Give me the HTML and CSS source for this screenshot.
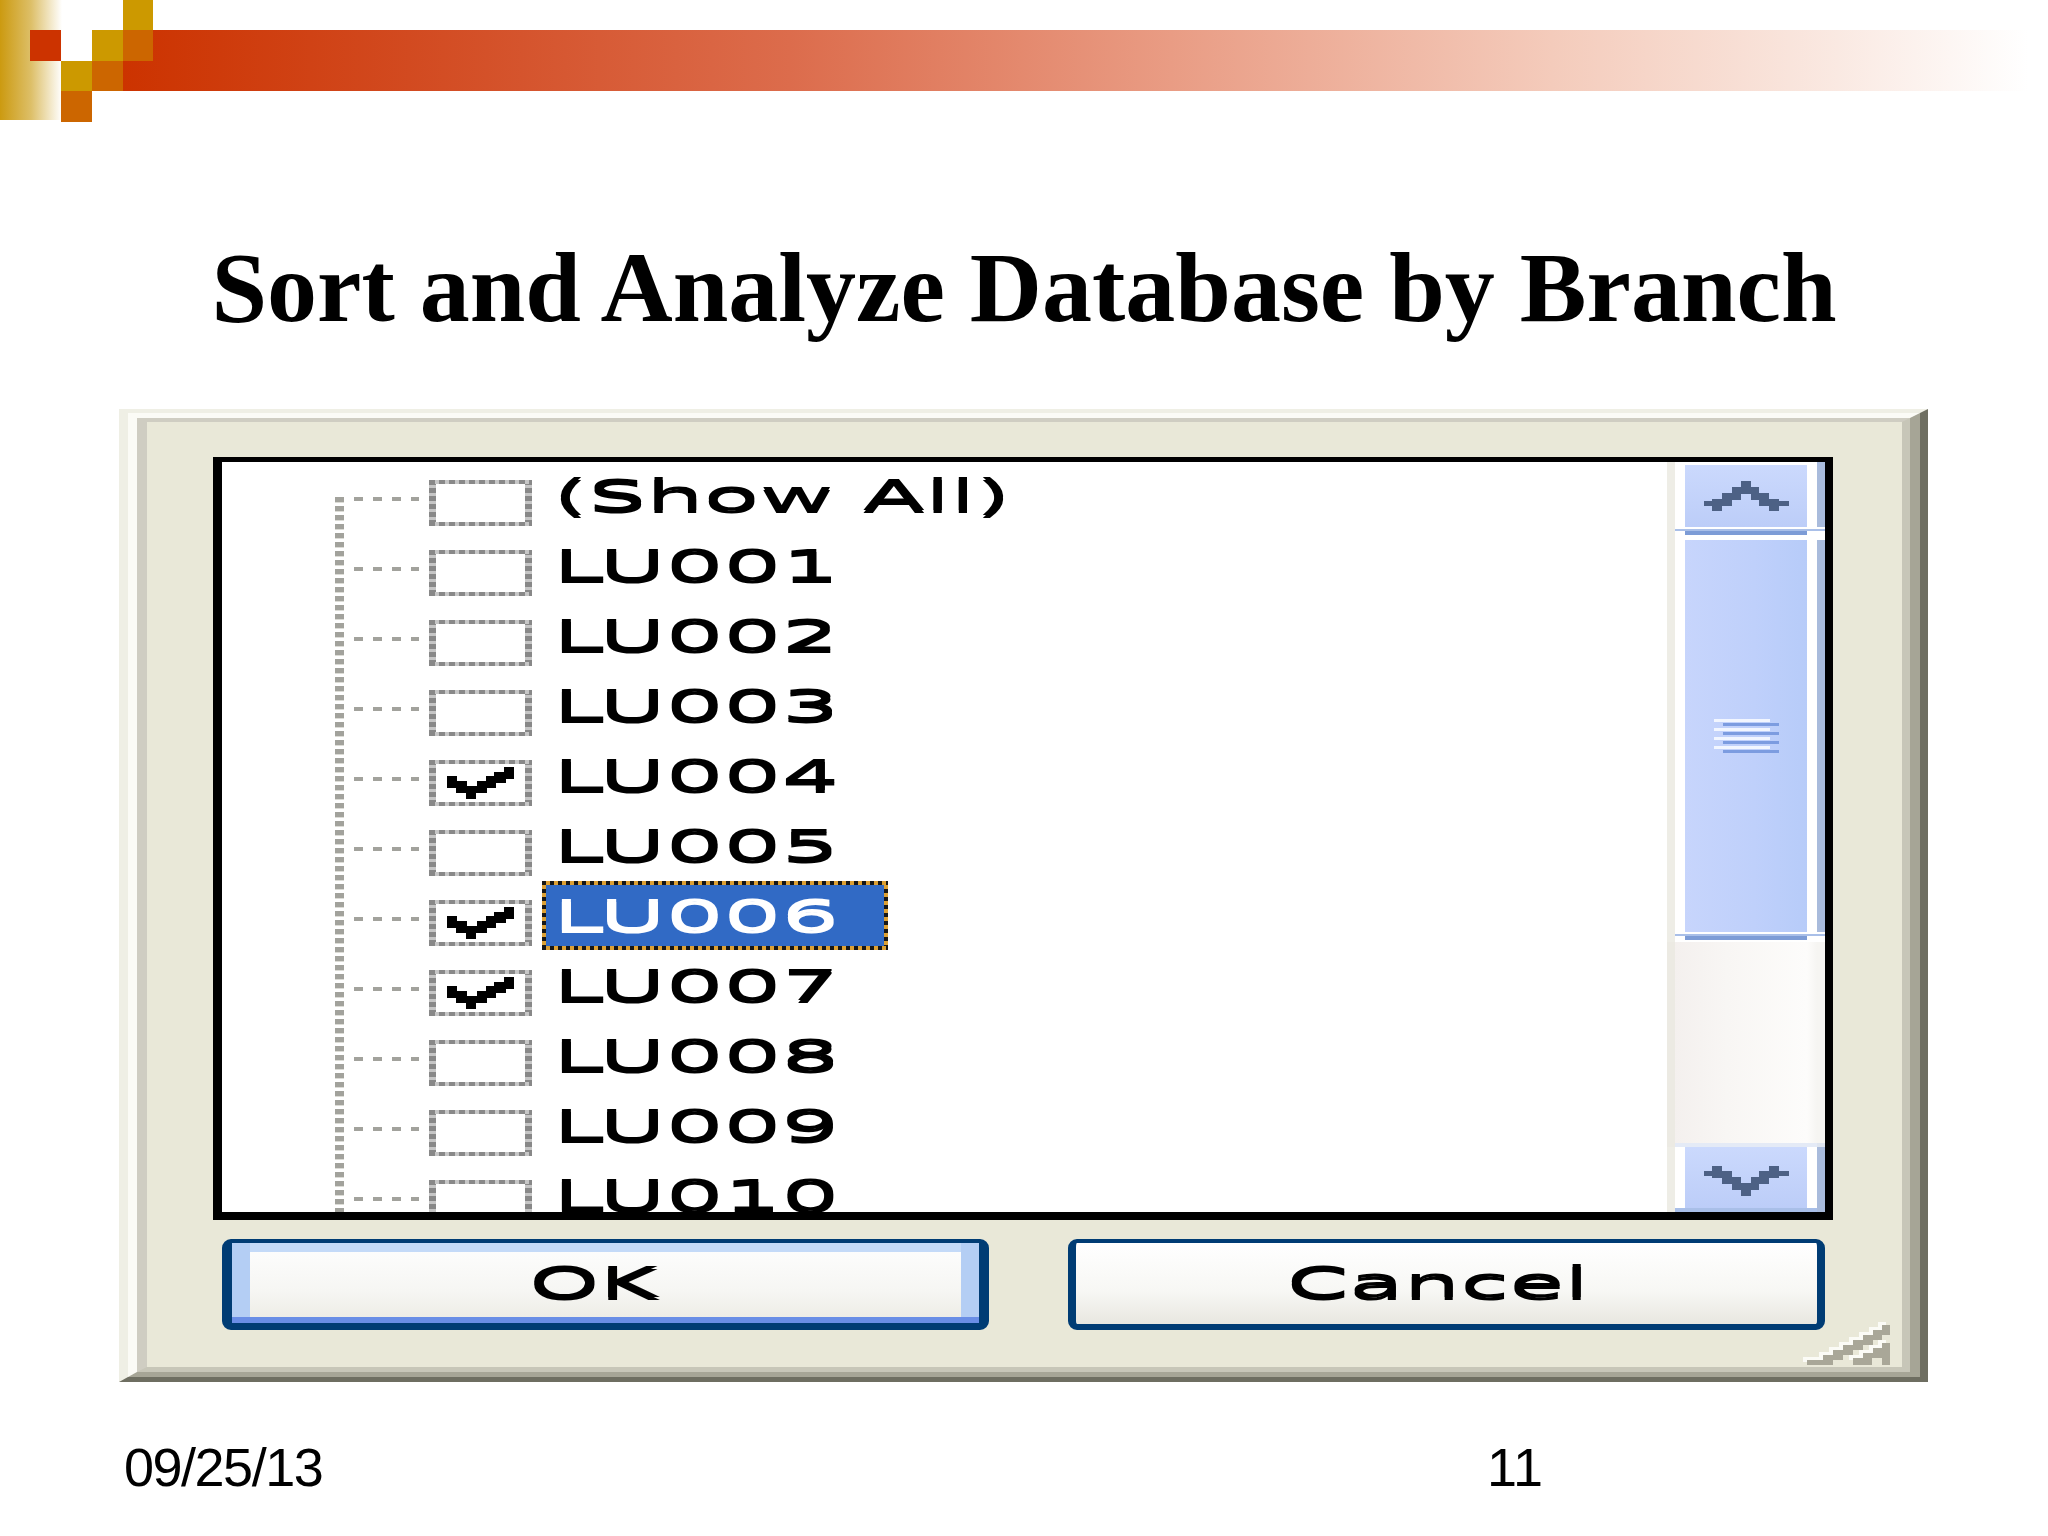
FILE: index.html
```html
<!DOCTYPE html>
<html>
<head>
<meta charset="utf-8">
<title>Sort and Analyze Database by Branch</title>
<link rel="stylesheet" href="styles.css">
</head>
<body>
<svg class="banner" width="2048" height="122" viewBox="0 0 2048 122">
  <defs>
    <linearGradient id="gold" x1="0" x2="1" y1="0" y2="0">
      <stop offset="0" stop-color="#cc9a10"/>
      <stop offset="0.5" stop-color="#ddbf68"/>
      <stop offset="1" stop-color="#ffffff"/>
    </linearGradient>
    <linearGradient id="band" x1="0" x2="1" y1="0" y2="0">
      <stop offset="0" stop-color="#cc3300"/>
      <stop offset="0.15" stop-color="#d24a20"/>
      <stop offset="0.35" stop-color="#dc6c4c"/>
      <stop offset="0.55" stop-color="#e99c84"/>
      <stop offset="0.75" stop-color="#f4cbbb"/>
      <stop offset="0.9" stop-color="#fae9e2"/>
      <stop offset="1" stop-color="#ffffff"/>
    </linearGradient>
  </defs>
  <rect x="0" y="0" width="62" height="120" fill="url(#gold)"/>
  <rect x="123" y="30" width="1905" height="61" fill="url(#band)"/>
  <rect x="30" y="30" width="31" height="31" fill="#cc3300"/>
  <rect x="123" y="0" width="30" height="30" fill="#cc9900"/>
  <rect x="92" y="30" width="31" height="31" fill="#cc9900"/>
  <rect x="61" y="61" width="31" height="30" fill="#cc9900"/>
  <rect x="123" y="30" width="30" height="31" fill="#cc6600"/>
  <rect x="92" y="61" width="31" height="30" fill="#cc6600"/>
  <rect x="61" y="91" width="31" height="31" fill="#cc6600"/>
</svg>

<h1 class="title">Sort and Analyze Database by Branch</h1>

<div class="dialog"><div class="dlg2"><div class="dlg3"><div class="face">
  <div class="listbox">
    <div class="tree">
      <div class="row"><i class="dash"></i><i class="cb"></i><span class="label"><span class="txt">(Show All)</span></span></div>
      <div class="row"><i class="dash"></i><i class="cb"></i><span class="label"><span class="txt">LU001</span></span></div>
      <div class="row"><i class="dash"></i><i class="cb"></i><span class="label"><span class="txt">LU002</span></span></div>
      <div class="row"><i class="dash"></i><i class="cb"></i><span class="label"><span class="txt">LU003</span></span></div>
      <div class="row"><i class="dash"></i><i class="cb"><svg class="check" width="103" height="46" viewBox="0 0 103 46"><g fill="#000"><rect x="18" y="16" width="10" height="12"/><rect x="18" y="21" width="20" height="7"/><rect x="27" y="26" width="31" height="7"/><rect x="37" y="31" width="10" height="8"/><rect x="48" y="21" width="19" height="7"/><rect x="57" y="16" width="20" height="7"/><rect x="65" y="12" width="20" height="7"/><rect x="75" y="7" width="10" height="7"/></g></svg></i><span class="label"><span class="txt">LU004</span></span></div>
      <div class="row"><i class="dash"></i><i class="cb"></i><span class="label"><span class="txt">LU005</span></span></div>
      <div class="row"><i class="dash"></i><i class="cb"><svg class="check" width="103" height="46" viewBox="0 0 103 46"><g fill="#000"><rect x="18" y="16" width="10" height="12"/><rect x="18" y="21" width="20" height="7"/><rect x="27" y="26" width="31" height="7"/><rect x="37" y="31" width="10" height="8"/><rect x="48" y="21" width="19" height="7"/><rect x="57" y="16" width="20" height="7"/><rect x="65" y="12" width="20" height="7"/><rect x="75" y="7" width="10" height="7"/></g></svg></i><span class="label sel"><span class="txt">LU006</span></span></div>
      <div class="row"><i class="dash"></i><i class="cb"><svg class="check" width="103" height="46" viewBox="0 0 103 46"><g fill="#000"><rect x="18" y="16" width="10" height="12"/><rect x="18" y="21" width="20" height="7"/><rect x="27" y="26" width="31" height="7"/><rect x="37" y="31" width="10" height="8"/><rect x="48" y="21" width="19" height="7"/><rect x="57" y="16" width="20" height="7"/><rect x="65" y="12" width="20" height="7"/><rect x="75" y="7" width="10" height="7"/></g></svg></i><span class="label"><span class="txt">LU007</span></span></div>
      <div class="row"><i class="dash"></i><i class="cb"></i><span class="label"><span class="txt">LU008</span></span></div>
      <div class="row"><i class="dash"></i><i class="cb"></i><span class="label"><span class="txt">LU009</span></span></div>
      <div class="row"><i class="dash"></i><i class="cb"></i><span class="label"><span class="txt">LU010</span></span></div>
    </div>
    <div class="sb">
      <div class="sb-pad"></div>
      <div class="sb-btn">
        <svg width="85" height="30" viewBox="0 0 85 30"><g fill="#4d6185"><rect x="37" y="0" width="10" height="7"/><rect x="28" y="6" width="27" height="7"/><rect x="18" y="12" width="19" height="7"/><rect x="47" y="12" width="18" height="7"/><rect x="8" y="18" width="20" height="7"/><rect x="55" y="18" width="20" height="7"/><rect x="0" y="20" width="8" height="5"/><rect x="75" y="20" width="10" height="5"/><rect x="8" y="24" width="10" height="6"/><rect x="65" y="24" width="10" height="6"/></g></svg>
      </div>
      <div class="sb-sep"></div>
      <div class="sb-thumb">
        <svg width="65" height="34" viewBox="0 0 65 34"><g fill="#f2f6ff"><rect x="0" y="0" width="56" height="3"/><rect x="0" y="9" width="56" height="3"/><rect x="0" y="18" width="56" height="3"/><rect x="0" y="27" width="56" height="3"/></g><g fill="#7c9ce0"><rect x="9" y="4" width="56" height="3"/><rect x="9" y="13" width="56" height="3"/><rect x="9" y="22" width="56" height="3"/><rect x="9" y="31" width="56" height="3"/></g></svg>
      </div>
      <div class="sb-sep sb-sep2"></div>
      <div class="sb-track"></div>
      <div class="sb-line"></div>
      <div class="sb-btn down">
        <svg width="85" height="30" viewBox="0 0 85 30"><g fill="#4d6185"><rect x="37" y="23" width="10" height="7"/><rect x="28" y="17" width="27" height="7"/><rect x="18" y="11" width="19" height="7"/><rect x="47" y="11" width="18" height="7"/><rect x="8" y="5" width="20" height="7"/><rect x="55" y="5" width="20" height="7"/><rect x="0" y="5" width="8" height="5"/><rect x="75" y="5" width="10" height="5"/><rect x="8" y="0" width="10" height="6"/><rect x="65" y="0" width="10" height="6"/></g></svg>
      </div>
      <div class="sb-end"></div>
    </div>
  </div>
  <div class="buttons">
    <div class="btn ok"><span class="txt">OK</span></div>
    <div class="btn cancel"><span class="txt">Cancel</span></div>
  </div>
  <svg class="grip" width="95" height="45" viewBox="0 0 95 45">
    <g fill="#fbfbf6">
      <rect x="81" y="2" width="8" height="5"/><rect x="72" y="7" width="17" height="5"/><rect x="62" y="12" width="19" height="5"/><rect x="52" y="17" width="20" height="5"/><rect x="42" y="22" width="20" height="5"/><rect x="32" y="27" width="20" height="5"/><rect x="22" y="32" width="20" height="5"/><rect x="6" y="37" width="26" height="5"/>
      <rect x="81" y="20" width="8" height="5"/><rect x="72" y="25" width="17" height="5"/><rect x="62" y="30" width="19" height="5"/><rect x="52" y="35" width="19" height="5"/>
    </g>
    <g fill="#a9a798">
      <rect x="85" y="5" width="8" height="5"/><rect x="76" y="10" width="17" height="5"/><rect x="66" y="15" width="19" height="5"/><rect x="56" y="20" width="20" height="5"/><rect x="46" y="25" width="20" height="5"/><rect x="36" y="30" width="20" height="5"/><rect x="26" y="35" width="20" height="5"/><rect x="10" y="40" width="26" height="5"/>
      <rect x="85" y="23" width="8" height="22"/><rect x="76" y="28" width="17" height="5"/><rect x="66" y="33" width="19" height="5"/><rect x="56" y="38" width="19" height="7"/>
    </g>
  </svg>
</div></div></div></div>

<div class="footer">
  <span class="date">09/25/13</span>
  <span class="page">11</span>
</div>
</body>
</html>
```

FILE: styles.css
```css
html, body {
  margin: 0;
  padding: 0;
  background: #ffffff;
}

body {
  width: 2048px;
  height: 1536px;
  overflow: hidden;
  font-family: "Liberation Sans", Arial, sans-serif;
  color: #000;
}

.banner {
  display: block;
}

.title {
  margin: 106px 0 0;
  height: 120px;
  line-height: 120px;
  font-family: "Liberation Serif", "Times New Roman", serif;
  font-weight: bold;
  font-size: 100px;
  text-align: center;
  white-space: nowrap;
  color: #000;
}

/* ---------- dialog frame ---------- */
.dialog {
  margin: 61px 0 0 119px;
  width: 1809px;
  height: 973px;
  box-sizing: border-box;
  border-style: solid;
  border-width: 4px 8px 5px 9px;
  border-color: #efefe5 #6e6e61 #6e6e61 #efefe5;
}

.dlg2 {
  height: 100%;
  box-sizing: border-box;
  border-style: solid;
  border-width: 5px 10px 5px 9px;
  border-color: #fbfbf6 #a6a596 #a6a596 #fbfbf6;
}

.dlg3 {
  height: 100%;
  box-sizing: border-box;
  border-style: solid;
  border-width: 4px 8px 5px 10px;
  border-color: #cfcdc2 #c7c6b8 #c7c6b8 #cfcdc2;
}

.face {
  position: relative;
  height: 100%;
  box-sizing: border-box;
  background: #e9e8d8;
  padding: 35px 69px 0 66px;
}

/* ---------- list box ---------- */
.listbox {
  display: flex;
  height: 763px;
  box-sizing: border-box;
  border-style: solid;
  border-color: #000;
  border-width: 5px 8px 8px 9px;
  background: #fff;
  overflow: hidden;
}

.tree {
  flex: 1;
  padding-top: 6px;
  overflow: hidden;
  background-color: #fff;
  background-image: repeating-linear-gradient(to bottom, #a2a29c 0 5px, #dcdcd6 5px 6px, transparent 6px 9px);
  background-position: 113px 35px;
  background-size: 9px 100%;
  background-repeat: no-repeat;
}

.row {
  display: flex;
  align-items: flex-start;
  height: 70px;
}

.dash {
  display: block;
  flex: none;
  margin: 29px 0 0 132px;
  width: 65px;
  height: 4px;
  background: repeating-linear-gradient(to right, #a2a29c 0 9px, transparent 9px 19px);
}

.cb {
  display: block;
  flex: none;
  margin: 12px 0 0 10px;
  width: 103px;
  height: 46px;
  background:
    repeating-linear-gradient(to right, #888888 0 6px, #c6c6c6 6px 10px) top / 100% 4px no-repeat,
    repeating-linear-gradient(to right, #888888 0 6px, #c6c6c6 6px 10px) bottom / 100% 4px no-repeat,
    repeating-linear-gradient(to bottom, #888888 0 5px, #c6c6c6 5px 8px) left / 7px 100% no-repeat,
    repeating-linear-gradient(to bottom, #888888 0 5px, #c6c6c6 5px 8px) right / 7px 100% no-repeat,
    #ffffff;
}

.check {
  display: block;
}

.label {
  display: block;
  flex: none;
  margin: -7px 0 0 10px;
  height: 69px;
  line-height: 69px;
  padding-left: 11px;
  box-sizing: border-box;
  font-family: "DejaVu Sans", Verdana, sans-serif;
  font-size: 42.5px;
  color: #000;
  white-space: nowrap;
}

.label.sel {
  width: 346px;
  color: #fff;
  background:
    repeating-linear-gradient(to right, #161616 0 4px, #dca034 4px 8px) top / 100% 4px no-repeat,
    repeating-linear-gradient(to right, #161616 0 4px, #dca034 4px 8px) bottom / 100% 4px no-repeat,
    repeating-linear-gradient(to bottom, #161616 0 4px, #dca034 4px 8px) left / 4px 100% no-repeat,
    repeating-linear-gradient(to bottom, #161616 0 4px, #dca034 4px 8px) right / 4px 100% no-repeat,
    #316ac5;
}

.txt {
  display: inline-block;
  transform: scaleX(2.14);
  transform-origin: 0 50%;
  text-shadow: 0 3px 0 currentColor;
}

/* ---------- scrollbar ---------- */
.sb {
  flex: none;
  width: 158px;
  display: flex;
  flex-direction: column;
}

.sb-pad {
  height: 3px;
  background: linear-gradient(to right, #eeede6 0 8px, #ffffff 8px 150px, #a9bbdc 150px);
}

.sb-btn {
  height: 62px;
  box-sizing: border-box;
  display: flex;
  align-items: center;
  justify-content: center;
  background:
    linear-gradient(to right, #eeede6 0 8px, #ffffff 8px 18px, transparent 18px 140px, #ffffff 140px 150px, #a9bbdc 150px),
    linear-gradient(to bottom, #cbd9fd, #bccdf8);
}

.sb-btn svg {
  display: block;
}

.sb-btn.down {
  height: 61px;
  padding-top: 6px;
}

.sb-sep {
  height: 13px;
  background:
    linear-gradient(to right, #eeede6 0 8px, transparent 8px),
    linear-gradient(to bottom, #ffffff 0 2px, #a9bfe8 2px 4px, transparent 4px),
    linear-gradient(to right, #ffffff 0 18px, #7d9cd6 18px 140px, #ffffff 140px) 0 4px / 100% 4px no-repeat,
    #ffffff;
}

.sb-sep2 {
  height: 10px;
}

.sb-thumb {
  height: 392px;
  display: flex;
  align-items: center;
  justify-content: center;
  background:
    linear-gradient(to right, #eeede6 0 8px, #ffffff 8px 18px, transparent 18px 140px, #ffffff 140px 150px, #a9bbdc 150px),
    linear-gradient(to right, #c9d6fc, #bfd0fb 55%, #b4caf8);
}

.sb-thumb svg {
  display: block;
}

.sb-track {
  flex: 1;
  background: linear-gradient(to right, #eceae3 0 8px, #f4f0ee 8px, #f8f6f4 60px, #fdfcfb 140px, #f6f5f2 150px);
}

.sb-line {
  height: 4px;
  background: linear-gradient(to right, #eceae3 0 8px, #e4eaf6 8px 150px, #dfe5ef 150px);
}

.sb-end {
  height: 4px;
  background: linear-gradient(to right, #eeede6 0 8px, #a9bfe8 8px 150px, #a9bbdc 150px);
}

/* ---------- buttons ---------- */
.buttons {
  display: flex;
  margin-top: 19px;
  padding-left: 9px;
  gap: 79px;
}

.btn {
  height: 91px;
  box-sizing: border-box;
  border-style: solid;
  border-color: #003c74;
  border-radius: 9px;
  text-align: center;
  line-height: 80px;
  font-family: "DejaVu Sans", Verdana, sans-serif;
  font-size: 42.5px;
  color: #000;
  white-space: nowrap;
}

.btn .txt {
  transform: scaleX(2.1);
  transform-origin: 50% 50%;
}

.ok {
  width: 767px;
  padding-right: 24px;
  border-width: 4px 10px 7px 10px;
  background: linear-gradient(#fefefe, #f6f6f3 60%, #ecebe4);
  box-shadow:
    inset 0 -6px 0 #6a8ee6,
    inset 18px 0 0 #b4cef4,
    inset -18px 0 0 #b4cef4,
    inset 0 9px 0 #c4daf8;
}

.cancel {
  width: 757px;
  padding-right: 18px;
  border-width: 4px 8px 6px 8px;
  background: linear-gradient(#ffffff, #f7f7f4 60%, #e8e7e0);
}

.grip {
  position: absolute;
  right: 10px;
  bottom: 2px;
  display: block;
}

/* ---------- footer ---------- */
.footer {
  display: flex;
  margin-top: 55px;
  padding-left: 124px;
  height: 60px;
  line-height: 60px;
  font-family: "Liberation Sans", Arial, sans-serif;
  font-size: 54px;
  color: #000;
}

.date {
  width: 1363px;
  letter-spacing: -1.5px;
}
```
